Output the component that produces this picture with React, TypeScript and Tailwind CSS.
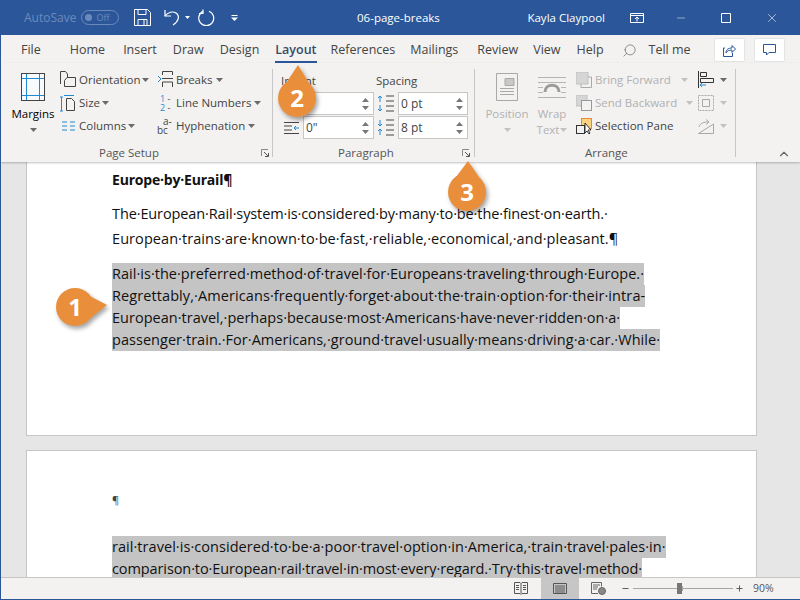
import React from "react";
import { ChevronUp, Minus, Plus, Search, X } from "lucide-react";

const Caret = ({ dim = false }: { dim?: boolean }) => (
  <svg width="7" height="4" viewBox="0 0 7 4" className="shrink-0">
    <path d="M0 0h7L3.5 4z" fill={dim ? "#c2c2c2" : "#6a6a6a"} />
  </svg>
);

const Launcher = () => (
  <svg width="8" height="8" viewBox="0 0 8 8" fill="none" stroke="#888">
    <path d="M.5 7V.5H7" />
    <path d="M3 3l4 4M4 7.500h3.500V4" stroke="#555" />
  </svg>
);

const Spinner = () => (
  <div className="flex flex-col gap-[4px] pr-[4px]">
    <svg width="7" height="4" viewBox="0 0 7 4"><path d="M0 4h7L3.5 0z" fill="#777" /></svg>
    <svg width="7" height="4" viewBox="0 0 7 4"><path d="M0 0h7L3.5 4z" fill="#777" /></svg>
  </div>
);

const NumInput = ({ value, w }: { value: string; w: string }) => (
  <div className={`flex h-[23px] items-center justify-between border border-[#c6c6c6] bg-white pl-[2px] text-[12px] text-[#444] ${w}`}>
    <span>{value}</span>
    <Spinner />
  </div>
);

const Row = ({ icon, label, caret, dim = false, gap = "ml-[3px]" }: { icon: React.ReactNode; label: string; caret?: React.ReactNode; dim?: boolean; gap?: string }) => (
  <div className={`flex h-[23px] items-center whitespace-nowrap ${dim ? "text-[#b1b1b1]" : "text-[#444]"}`}>
    <span className="flex shrink-0 items-center">{icon}</span>
    <span className={gap}>{label}</span>
    {caret}
  </div>
);

type Line = { text: string; cls: string };

const PAGE_ONE_SELECTED: Line[] = [
  { text: "Rail·is·the·preferred·method·of·travel·for·Europeans·traveling·through·Europe.·", cls: "tracking-[0.025px]" },
  { text: "Regrettably,·Americans·frequently·forget·about·the·train·option·for·their·intra-", cls: "tracking-[0.09px]" },
  { text: "European·travel,·perhaps·because·most·Americans·have·never·ridden·on·a·", cls: "tracking-[0.015px]" },
  { text: "passenger·train.·For·Americans,·ground·travel·usually·means·driving·a·car.·While·", cls: "tracking-[0.04px]" },
];

const PAGE_TWO_SELECTED: Line[] = [
  { text: "rail·travel·is·considered·to·be·a·poor·travel·option·in·America,·train·travel·pales·in·", cls: "tracking-[0.05px]" },
  { text: "comparison·to·European·rail·travel·in·most·every·regard.·Try·this·travel·method·", cls: "tracking-[-0.1px]" },
];

const Selected = ({ lines }: { lines: Line[] }) => (
  <div className="flex flex-col items-start">
    {lines.map((line) => (
      <div key={line.text} className={`h-[22px] whitespace-nowrap bg-[#c4c4c4] leading-[21px] ${line.cls}`}>{line.text}</div>
    ))}
  </div>
);

const Callout = ({ n, className, tip }: { n: string; className: string; tip: string }) => (
  <div className={`absolute z-20 h-[70px] w-[70px] ${className}`}>
    <svg width="70" height="70" viewBox="0 0 70 70" className="absolute inset-0 drop-shadow-[2px_3px_2px_rgba(0,0,0,0.35)]">
      <circle cx="35" cy="35" r="19" fill="#e98f3c" />
      <path d={tip} fill="#e98f3c" />
    </svg>
    <span className="absolute inset-0 flex items-center justify-center text-[24px] font-bold text-white">{n}</span>
  </div>
);

export default function App() {
  return (
    <div className="relative flex h-[600px] w-[800px] flex-col overflow-hidden border-b border-l border-[#2b579a] bg-[#e6e6e6] font-['Open_Sans','Noto_Sans',sans-serif] text-[11.5px]">
      {/* Title bar */}
      <div className="-ml-px flex h-[35px] shrink-0 items-center bg-[#2b579a] text-white">
        <span className="ml-[24px] text-[12px] text-[#6b8abb]">AutoSave</span>
        <div className="ml-[5px] flex h-[15px] w-[38px] items-center rounded-full border border-[#6b8abb] pl-[3px] text-[9px] text-[#6b8abb]">
          <span className="h-[7px] w-[7px] rounded-full bg-[#6b8abb]" />
          <span className="ml-[4px]">Off</span>
        </div>
        <svg width="17" height="17" viewBox="0 0 17 17" fill="none" stroke="white" className="ml-[15px]">
          <path d="M.5.5h13l3 3v13H.5z" />
          <path d="M4 .5v5h8v-5M4 16.5v-6h9v6M10 11v5" />
        </svg>
        <svg width="17" height="17" viewBox="0 0 17 17" fill="none" stroke="white" strokeWidth="1.2" className="ml-[13px]">
          <path d="M1 1v6h6" />
          <path d="M1 7c3-4 8-5 11-3 4 3 3 8-3 12" />
        </svg>
        <svg width="5" height="3" viewBox="0 0 5 3" className="ml-[4px]"><path d="M0 0h5L2.5 3z" fill="white" /></svg>
        <svg width="17" height="17" viewBox="0 0 17 17" fill="none" stroke="white" strokeWidth="1.2" className="ml-[8px]">
          <path d="M11 2.2a7.5 7.5 0 1 1-6 .2" />
          <path d="M5 .5v4H1" />
        </svg>
        <svg width="7" height="6" viewBox="0 0 7 6" className="ml-[16px]"><path d="M.5.5h6" stroke="white" /><path d="M0 2.5h7L3.5 6z" fill="white" /></svg>
        <span className="ml-[118px] w-[84px] text-center text-[11.5px] whitespace-nowrap">06-page-breaks</span>
        <span className="ml-[87px] whitespace-nowrap text-[11.5px]">Kayla Claypool</span>
        <svg width="14" height="10" viewBox="0 0 14 10" fill="none" stroke="white" className="ml-[25px]">
          <path d="M.5.5h13v9H.5zM.5 2.5h13M7 8.5V4M5 6l2-2 2 2" />
        </svg>
        <Minus size={12} strokeWidth={1} className="ml-[31px]" />
        <svg width="10" height="10" viewBox="0 0 10 10" fill="none" stroke="white" className="ml-[34px]"><path d="M.5.5h9v9h-9z" /></svg>
        <X size={14} strokeWidth={1} className="ml-[34px]" />
      </div>

      {/* Tabs */}
      <div className="flex h-[28px] shrink-0 items-center bg-[#f3f2f1] pt-[2px] text-[12.5px] text-[#444]">
        <span className="ml-[20px]">File</span>
        <span className="ml-[29px]">Home</span>
        <span className="ml-[18px]">Insert</span>
        <span className="ml-[16px]">Draw</span>
        <span className="ml-[16px]">Design</span>
        <span className="relative ml-[16px] font-semibold text-[#3a4a66]">
          Layout
          <span className="absolute -bottom-[5px] left-0 h-[3px] w-full bg-[#2b579a]" />
        </span>
        <span className="ml-[14px]">References</span>
        <span className="ml-[15px]">Mailings</span>
        <span className="ml-[19px]">Review</span>
        <span className="ml-[15px]">View</span>
        <span className="ml-[16px]">Help</span>
        <Search size={15} strokeWidth={1} className="ml-[18px] -scale-x-100 text-[#555]" />
        <span className="ml-[12px]">Tell me</span>
        <div className="ml-[23px] flex h-[24px] w-[31px] items-center justify-center rounded-[2px] border border-[#e4e4e4] bg-white">
          <svg width="13" height="13" viewBox="0 0 13 13" fill="none" stroke="#2b579a">
            <path d="M2 4H.5v8.500h9V9" />
            <path d="M3 9c0-4 3-5 6-5V1.500l3.500 3.500L9 8.500V6C6 6 4 7 3 9z" />
          </svg>
        </div>
        <div className="ml-[9px] flex h-[24px] w-[31px] items-center justify-center rounded-[2px] border border-[#e4e4e4] bg-white">
          <svg width="13" height="12" viewBox="0 0 13 12" fill="none" stroke="#2b579a"><path d="M.5.5h12v8H6L3.500 11V8.500h-3z" /></svg>
        </div>
      </div>

      {/* Ribbon */}
      <div className="z-10 flex h-[99px] shrink-0 items-start bg-[#f3f2f1] pt-[6px] shadow-[0_1px_2px_rgba(0,0,0,0.25)]">
        {/* Page Setup */}
        <div className="flex h-[88px] w-[272px] shrink-0 flex-col border-r border-[#c6c6c6]">
          <div className="flex h-[78px] shrink-0">
            <div className="ml-[10px] flex w-[44px] flex-col items-center pt-[4px]">
              <svg width="24" height="28" viewBox="0 0 24 28" fill="#f8fbfd">
                <rect x=".5" y=".5" width="23" height="27" stroke="#444" />
                <path d="M5.500 1v26M18.500 1v26M1 5.500h22M1 22.500h22" stroke="#1f8ad2" />
              </svg>
              <span className="mt-[4px]">Margins</span>
              <span className="mt-[6px]"><Caret /></span>
            </div>
            <div className="ml-[5px] -mt-[1px] flex w-[97px] shrink-0 flex-col">
              <Row label="Orientation" gap="ml-[3px]" caret={<span className="ml-[1px]"><Caret /></span>} icon={
                <svg width="16" height="17" viewBox="0 0 16 17" fill="none" stroke="#444"><path d="M.5 13V.5h5l2 2.500v3M7 6.500h8.500v9H4.500v-6z" /></svg>
              } />
              <Row label="Size" gap="ml-[3px]" caret={<span className="ml-[2px]"><Caret /></span>} icon={
                <svg width="16" height="18" viewBox="0 0 16 18" fill="none"><path d="M1.500 3v14M0 3h3M0 17h3M4 1.500h10" stroke="#1f8ad2" /><path d="M6.500 4.500h5l3 3v9h-8z" stroke="#444" /></svg>
              } />
              <Row label="Columns" gap="ml-[4px]" caret={<span className="ml-[2px]"><Caret /></span>} icon={
                <svg width="13" height="10" viewBox="0 0 13 10" stroke="#1f8ad2" className="ml-[2px]"><path d="M0 1h5M0 5h5M0 9h5M8 1h5M8 5h5M8 9h5" /></svg>
              } />
            </div>
            <div className="-mt-[1px] flex flex-col">
              <Row label="Breaks" caret={<span className="ml-[3px]"><Caret /></span>} icon={
                <svg width="16" height="17" viewBox="0 0 16 17" fill="none"><path d="M1 5l3 3-3 3" stroke="#1f8ad2" /><path d="M5.500 4V.5h10V4M5 7.500h11M5.500 16v-5h10v5" stroke="#444" /></svg>
              } />
              <Row label="Line Numbers" caret={<span className="ml-[3px]"><Caret /></span>} icon={
                <span className="flex w-[16px] flex-col text-[9px] leading-[9px] text-[#1f8ad2]"><span className="ml-[3px]">1 <span className="text-[#444]">-</span></span><span className="ml-[3px]">2 <span className="text-[#444]">-</span></span></span>
              } />
              <Row label="Hyphenation" caret={<span className="ml-[3px]"><Caret /></span>} icon={
                <span className="flex w-[16px] flex-col text-[10px] leading-[9px] text-[#444]"><span className="ml-[6px]">a-</span><span>bc</span></span>
              } />
            </div>
          </div>
          <div className="flex h-[12px] shrink-0 items-center text-[#555]">
            <span className="ml-[98px]">Page Setup</span>
            <span className="ml-auto mr-[3px]"><Launcher /></span>
          </div>
        </div>

        {/* Paragraph */}
        <div className="flex h-[88px] w-[202px] shrink-0 flex-col border-r border-[#c6c6c6]">
          <div className="flex h-[78px] shrink-0 flex-col pt-[3px]">
            <div className="flex h-[20px] text-[#444]">
              <span className="ml-[8px]">Indent</span>
              <span className="ml-[60px]">Spacing</span>
            </div>
            <div className="flex h-[23px] items-center gap-[1px]">
              <span className="ml-[11px] w-[18px]" />
              <NumInput value="" w="w-[71px]" />
              <svg width="18" height="17" viewBox="0 0 18 17" fill="none" className="ml-[2px]"><path d="M3 1v6M1 3l2-2 2 2M3 10v6M1 14l2 2 2-2" stroke="#1f8ad2" /><path d="M9 1h8M9 6h8M9 11h8M9 16h8" stroke="#444" /></svg>
              <span className="ml-[2px]"><NumInput value="0 pt" w="w-[70px]" /></span>
            </div>
            <div className="mt-[1px] flex h-[23px] items-center gap-[1px]">
              <svg width="15" height="12" viewBox="0 0 15 12" fill="none" className="ml-[11px] mr-[3px]"><path d="M0 .5h15M0 4h8M0 8h8M0 11.500h15" stroke="#444" /><path d="M15 6H10M12 4L10 6l2 2" stroke="#1f8ad2" /></svg>
              <NumInput value='0"' w="w-[71px]" />
              <svg width="18" height="17" viewBox="0 0 18 17" fill="none" className="ml-[2px]"><path d="M3 1v6M1 5l2 2 2-2M3 10v6M1 12l2-2 2 2" stroke="#1f8ad2" /><path d="M9 1h8M9 6h8M9 11h8M9 16h8" stroke="#444" /></svg>
              <span className="ml-[2px]"><NumInput value="8 pt" w="w-[70px]" /></span>
            </div>
          </div>
          <div className="flex h-[12px] shrink-0 items-center text-[#555]">
            <span className="ml-[65px]">Paragraph</span>
            <span className="ml-auto mr-[4px]"><Launcher /></span>
          </div>
        </div>

        {/* Arrange */}
        <div className="flex h-[88px] w-[261px] shrink-0 flex-col border-r border-[#c6c6c6]">
          <div className="flex h-[78px] shrink-0 text-[#b1b1b1]">
            <div className="ml-[10px] flex w-[44px] flex-col items-center pt-[4px]">
              <svg width="22" height="28" viewBox="0 0 22 28" fill="none" stroke="#a8a8a8">
                <path d="M.5.5h21v27H.5zM4 18.500h14M4 21.500h14M4 15.500h14" />
                <path d="M9 5.500h9v7H9z" fill="#c8c8c8" />
              </svg>
              <span className="mt-[4px]">Position</span>
              <span className="mt-[6px]"><Caret dim /></span>
            </div>
            <div className="ml-[8px] flex w-[30px] flex-col items-center pt-[4px]">
              <svg width="28" height="28" viewBox="0 0 28 28" fill="none" stroke="#b4b4b4">
                <path d="M0 4.500h28M0 9.500h28M0 14.500h5M23 14.500h5M0 19.500h5M23 19.500h5M0 24.500h28" />
                <path d="M7 19c0-9 14-9 14 0" stroke="#9a9a9a" strokeWidth="3" />
              </svg>
              <span className="mt-[4px]">Wrap</span>
              <span className="flex items-center gap-[1px] leading-[16px]">Text<Caret dim /></span>
            </div>
            <div className="ml-[9px] -mt-[1px] flex w-[118px] shrink-0 flex-col">
              <Row dim label="Bring Forward" caret={<span className="ml-[10px]"><Caret dim /></span>} icon={
                <svg width="16" height="16" viewBox="0 0 16 16" fill="none"><path d="M12 5h3.500v10.500H5V12" stroke="#a8a8a8" /><rect x="0" y="0" width="12" height="12" fill="#d6d6d6" stroke="#c0c0c0" /></svg>
              } />
              <Row dim label="Send Backward" caret={<span className="ml-[9px]"><Caret dim /></span>} icon={
                <svg width="16" height="16" viewBox="0 0 16 16" fill="none"><rect x="0" y="0" width="11" height="11" fill="#d6d6d6" stroke="#c0c0c0" /><rect x="5.500" y="5.500" width="10" height="10" fill="#f3f2f1" stroke="#999" /></svg>
              } />
              <Row label="Selection Pane" icon={
                <svg width="16" height="16" viewBox="0 0 16 16" fill="none"><rect x="5.500" y=".5" width="10" height="10" fill="#fbd27e" stroke="#e8893a" /><rect x=".5" y="7.500" width="8" height="8" fill="#f3f2f1" stroke="#333" /><path d="M9 5v10l2-2 2 3 1-1-2-3h3z" fill="#fff" stroke="#333" /></svg>
              } />
            </div>
            <div className="ml-[4px] -mt-[1px] flex flex-col">
              <div className="flex h-[23px] items-center gap-[6px]">
                <svg width="16" height="17" viewBox="0 0 16 17" fill="none"><path d="M.5 0v17" stroke="#333" /><path d="M2.500 1.500h6v4h-6zM2.500 7.500h13v4h-13z" stroke="#333" /><path d="M8 14H2M4 12l-2 2 2 2" stroke="#1f8ad2" /></svg>
                <Caret />
              </div>
              <div className="flex h-[23px] items-center gap-[6px]">
                <svg width="16" height="16" viewBox="0 0 16 16" fill="none" stroke="#a8a8a8" strokeDasharray="2 1"><path d="M.5.5h15v15H.5z" /><path d="M4.500 4.500h7v7h-7z" strokeDasharray="none" /></svg>
                <Caret dim />
              </div>
              <div className="flex h-[23px] items-center gap-[6px]">
                <svg width="16" height="16" viewBox="0 0 16 16" fill="none" stroke="#a8a8a8"><path d="M.5 15.500h15V6zM1 9c1-4 5-5 9-5M8 1.500L11 4 8 6.500" /></svg>
                <Caret dim />
              </div>
            </div>
          </div>
          <div className="flex h-[12px] shrink-0 items-center text-[#555]">
            <span className="ml-[110px]">Arrange</span>
          </div>
        </div>
        <div className="flex h-[92px] flex-1 items-end justify-end pr-[9px]">
          <ChevronUp size={14} strokeWidth={2} className="text-[#666]" />
        </div>
      </div>

      {/* Document */}
      <div className="flex min-h-0 flex-1 flex-col overflow-hidden pl-[25px] text-[14.5px] text-[#111]">
        <div className="h-[274px] w-[731px] shrink-0 border-x border-b border-[#c6c6c6] bg-white pl-[85px]">
          <div className="mt-[7px] text-[14px] font-bold leading-[22px] tracking-[-0.2px]">Europe·by·Eurail¶</div>
          <div className="mt-[10px] whitespace-nowrap leading-[25px]">
            <span className="tracking-[-0.11px]">The·European·Rail·system·is·considered·by·many·to·be·the·finest·on·earth.·</span>
            <br />
            <span className="tracking-[0.07px]">European·trains·are·known·to·be·fast,·reliable,·economical,·and·pleasant.¶</span>
          </div>
          <div className="mt-[12px]">
            <Selected lines={PAGE_ONE_SELECTED} />
          </div>
        </div>
        <div className="mt-[14px] w-[731px] flex-1 border-x border-t border-[#c6c6c6] bg-white pl-[85px]">
          <div className="mt-[41px] text-[11px] leading-[16px] text-[#444]">¶</div>
          <div className="mt-[28px]">
            <Selected lines={PAGE_TWO_SELECTED} />
          </div>
        </div>
      </div>

      {/* Status bar */}
      <div className="z-10 flex h-[22px] shrink-0 items-stretch border-t border-[#c6c6c6] bg-[#f3f2f1] text-[10.5px] text-[#555]">
        <div className="ml-[513px] flex items-center">
          <svg width="14" height="13" viewBox="0 0 14 13" fill="none" stroke="#555"><path d="M.5.5h5.500L7 1.500 8 .5h5.500v11H8l-1 1-1-1H.5zM7 1.500v10M2 3.500h3M2 5.500h3M2 7.500h3M9 3.500h3M9 5.500h3M9 7.500h3" /></svg>
        </div>
        <div className="ml-[13px] flex w-[38px] items-center justify-center bg-[#c6c6c6]">
          <svg width="14" height="11" viewBox="0 0 14 11" fill="none" stroke="#555"><path d="M.5.5h13v10H.5zM2 3h10M2 5h10M2 7h10M2 9h10" /></svg>
        </div>
        <div className="ml-[12px] flex items-center">
          <svg width="15" height="13" viewBox="0 0 15 13" fill="none" stroke="#666"><path d="M7 11.500H.5V.5h10v4M2 3h7M2 5h5M2 7h4" /><circle cx="11" cy="9" r="3.500" fill="#888" /></svg>
        </div>
        <div className="ml-[15px] flex items-center">
          <Minus size={9} strokeWidth={2.5} />
          <div className="relative ml-[3px] h-px w-[100px] bg-[#a6a6a6]">
            <span className="absolute -top-[5px] left-[44px] h-[11px] w-[5px] bg-[#777]" />
            <span className="absolute -top-[2px] left-[49px] h-[5px] w-px bg-[#a6a6a6]" />
          </div>
          <Plus size={9} strokeWidth={2.5} className="ml-[2px]" />
          <span className="ml-[9px]">90%</span>
        </div>
      </div>

      {/* Numbered callouts */}
      <Callout n="1" className="left-[39px] top-[272px]" tip="M46 22L67 33 48 48z" />
      <Callout n="2" className="left-[261px] top-[63px]" tip="M24 20L36 2 47 20z" />
      <Callout n="3" className="left-[431px] top-[157px]" tip="M24 20L36 4 47 20z" />
    </div>
  );
}
